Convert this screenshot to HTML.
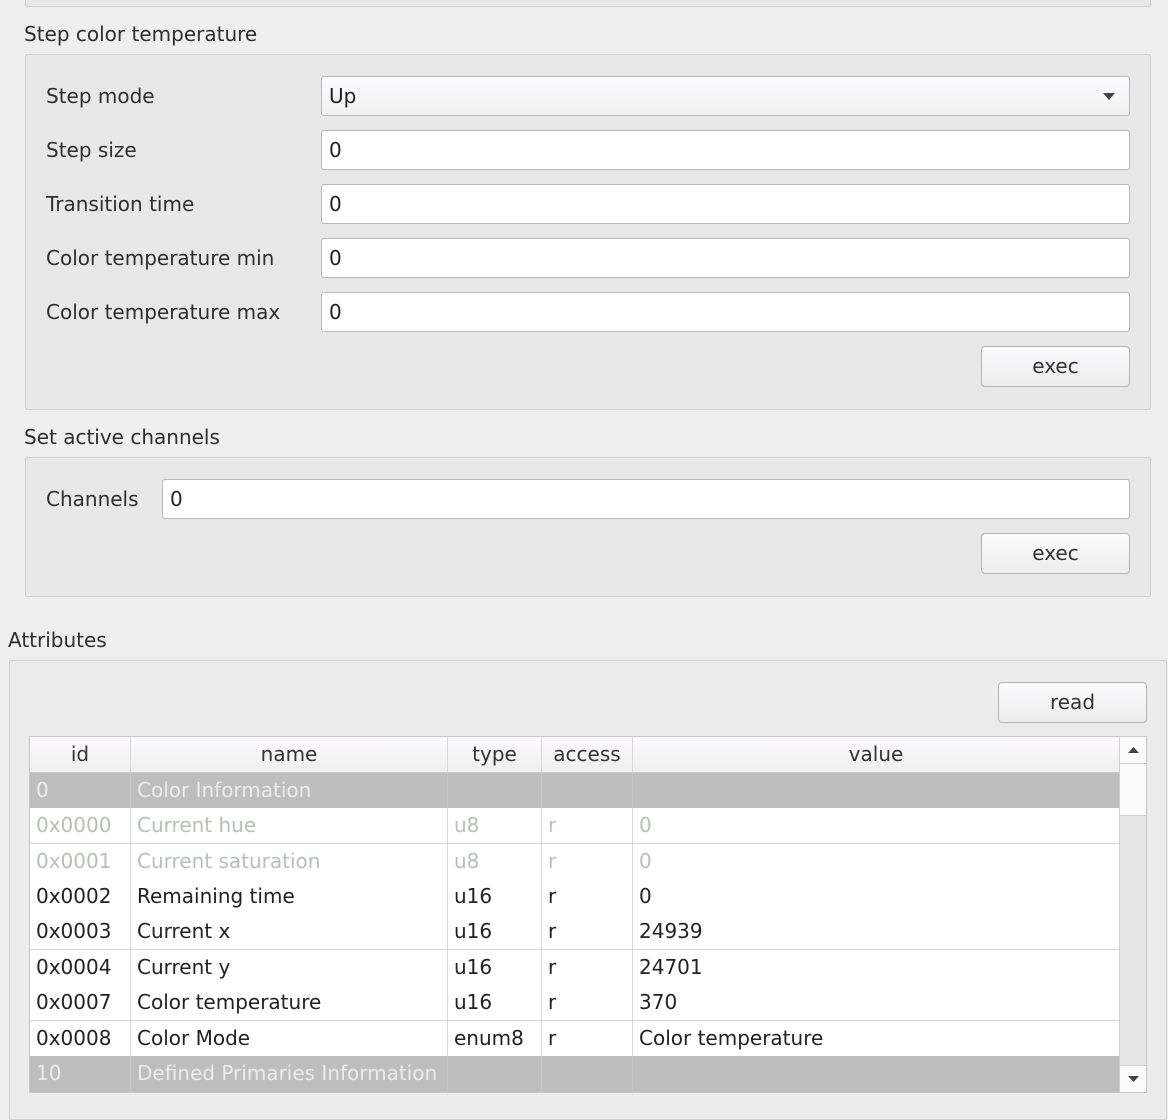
<!DOCTYPE html>
<html><head><meta charset="utf-8"><style>
*{box-sizing:border-box;margin:0;padding:0}
body{width:1168px;height:1114px;background:#efefef;font-family:"DejaVu Sans","Liberation Sans",sans-serif;font-size:20px;color:#2e2e2e;position:relative;overflow:hidden}
.a{position:absolute}
.gb{position:absolute;background:#e7e8e7;border:1px solid #cfd0cf;border-radius:2px}
.lbl{position:absolute;line-height:40px;white-space:nowrap}
.inp{position:absolute;background:#fff;border:1px solid #b9b9b9;border-radius:3px;height:40px;line-height:38px;padding-left:7px;color:#222}
.btn{position:absolute;height:41px;border:1px solid #b3b3b3;border-radius:4px;background:linear-gradient(#fcfafd,#ededed);text-align:center;line-height:39px;color:#333}
.row{position:absolute;left:0;width:1089px;height:36px;line-height:35px;border-bottom:1px solid #d6d6d6;background:#fff}
.row span{position:absolute;top:0;height:100%;padding-left:6px;border-right:1px solid #d6d6d6;white-space:nowrap;overflow:hidden}
.g{background:#bebebe;color:#ececec;border-bottom-color:#bebebe}
.g span{border-right-color:#c8c8c8}
.d{color:#b7c0b7}
.k{color:#222}
.c1{left:0;width:101px}.c2{left:101px;width:317px}.c3{left:418px;width:94px}.c4{left:512px;width:91px}.c5{left:603px;width:486px;border-right:none!important}
.hd span{text-align:center;padding-left:0;color:#333}
</style></head><body>
<div class="gb" style="left:25px;top:-10px;width:1126px;height:17px"></div>
<div class="lbl" style="left:24px;top:14px">Step color temperature</div>
<div class="gb" style="left:25px;top:54px;width:1126px;height:356px"></div>
<div class="lbl" style="left:46px;top:76px">Step mode</div>
<div class="inp" style="left:321px;top:76px;width:809px;background:linear-gradient(#fdfbfe,#f1f1f1)">Up<svg class="a" style="right:14px;top:16px" width="12" height="7"><path d="M0 0H12L6 7Z" fill="#444"/></svg></div>
<div class="lbl" style="left:46px;top:130px">Step size</div>
<div class="inp" style="left:321px;top:130px;width:809px">0</div>
<div class="lbl" style="left:46px;top:184px">Transition time</div>
<div class="inp" style="left:321px;top:184px;width:809px">0</div>
<div class="lbl" style="left:46px;top:238px">Color temperature min</div>
<div class="inp" style="left:321px;top:238px;width:809px">0</div>
<div class="lbl" style="left:46px;top:292px">Color temperature max</div>
<div class="inp" style="left:321px;top:292px;width:809px">0</div>
<div class="btn" style="left:981px;top:346px;width:149px">exec</div>

<div class="lbl" style="left:24px;top:417px">Set active channels</div>
<div class="gb" style="left:25px;top:457px;width:1126px;height:140px"></div>
<div class="lbl" style="left:46px;top:479px">Channels</div>
<div class="inp" style="left:162px;top:479px;width:968px">0</div>
<div class="btn" style="left:981px;top:533px;width:149px">exec</div>

<div class="lbl" style="left:8px;top:620px">Attributes</div>
<div class="gb" style="left:9px;top:660px;width:1158px;height:460px;background:#ececec"></div>
<div class="btn" style="left:998px;top:682px;width:149px">read</div>

<div class="a" style="left:29px;top:736px;width:1118px;height:357px;border:1px solid #c8c8c8;background:#fff;overflow:hidden">
<div class="row hd" style="top:0;height:36px;background:linear-gradient(#fdfbfe,#efefef);border-bottom:1px solid #c8c8c8"><span class="c1">id</span><span class="c2">name</span><span class="c3">type</span><span class="c4">access</span><span class="c5">value</span></div>
<div class="row g" style="top:36px"><span class="c1">0</span><span class="c2">Color Information</span><span class="c3"></span><span class="c4"></span><span class="c5"></span></div>
<div class="row d" style="top:71px"><span class="c1">0x0000</span><span class="c2">Current hue</span><span class="c3">u8</span><span class="c4">r</span><span class="c5">0</span></div>
<div class="row d" style="top:107px"><span class="c1">0x0001</span><span class="c2">Current saturation</span><span class="c3">u8</span><span class="c4">r</span><span class="c5">0</span></div>
<div class="row k" style="top:142px"><span class="c1">0x0002</span><span class="c2">Remaining time</span><span class="c3">u16</span><span class="c4">r</span><span class="c5">0</span></div>
<div class="row k" style="top:177px"><span class="c1">0x0003</span><span class="c2">Current x</span><span class="c3">u16</span><span class="c4">r</span><span class="c5">24939</span></div>
<div class="row k" style="top:213px"><span class="c1">0x0004</span><span class="c2">Current y</span><span class="c3">u16</span><span class="c4">r</span><span class="c5">24701</span></div>
<div class="row k" style="top:248px"><span class="c1">0x0007</span><span class="c2">Color temperature</span><span class="c3">u16</span><span class="c4">r</span><span class="c5">370</span></div>
<div class="row k" style="top:284px"><span class="c1">0x0008</span><span class="c2">Color Mode</span><span class="c3">enum8</span><span class="c4">r</span><span class="c5">Color temperature</span></div>
<div class="row g" style="top:319px"><span class="c1">10</span><span class="c2">Defined Primaries Information</span><span class="c3"></span><span class="c4"></span><span class="c5"></span></div>
<div class="a" style="left:1089px;top:0;width:27px;height:355px;background:#e6e6e6;border-left:1px solid #d0d0d0">
<div class="a" style="left:0;top:0;width:26px;height:27px;background:#fbfbfb;border-bottom:1px solid #d0d0d0"><svg class="a" style="left:8px;top:10px" width="11" height="6"><path d="M0 6H11L5.5 0Z" fill="#444"/></svg></div>
<div class="a" style="left:0;top:27px;width:26px;height:52px;background:#fbfbfb;border-bottom:1px solid #d0d0d0"></div>
<div class="a" style="left:0;top:328px;width:26px;height:27px;background:#fbfbfb;border-top:1px solid #d0d0d0"><svg class="a" style="left:8px;top:10px" width="11" height="6"><path d="M0 0H11L5.5 6Z" fill="#444"/></svg></div>
</div>
</div>
</body></html>
